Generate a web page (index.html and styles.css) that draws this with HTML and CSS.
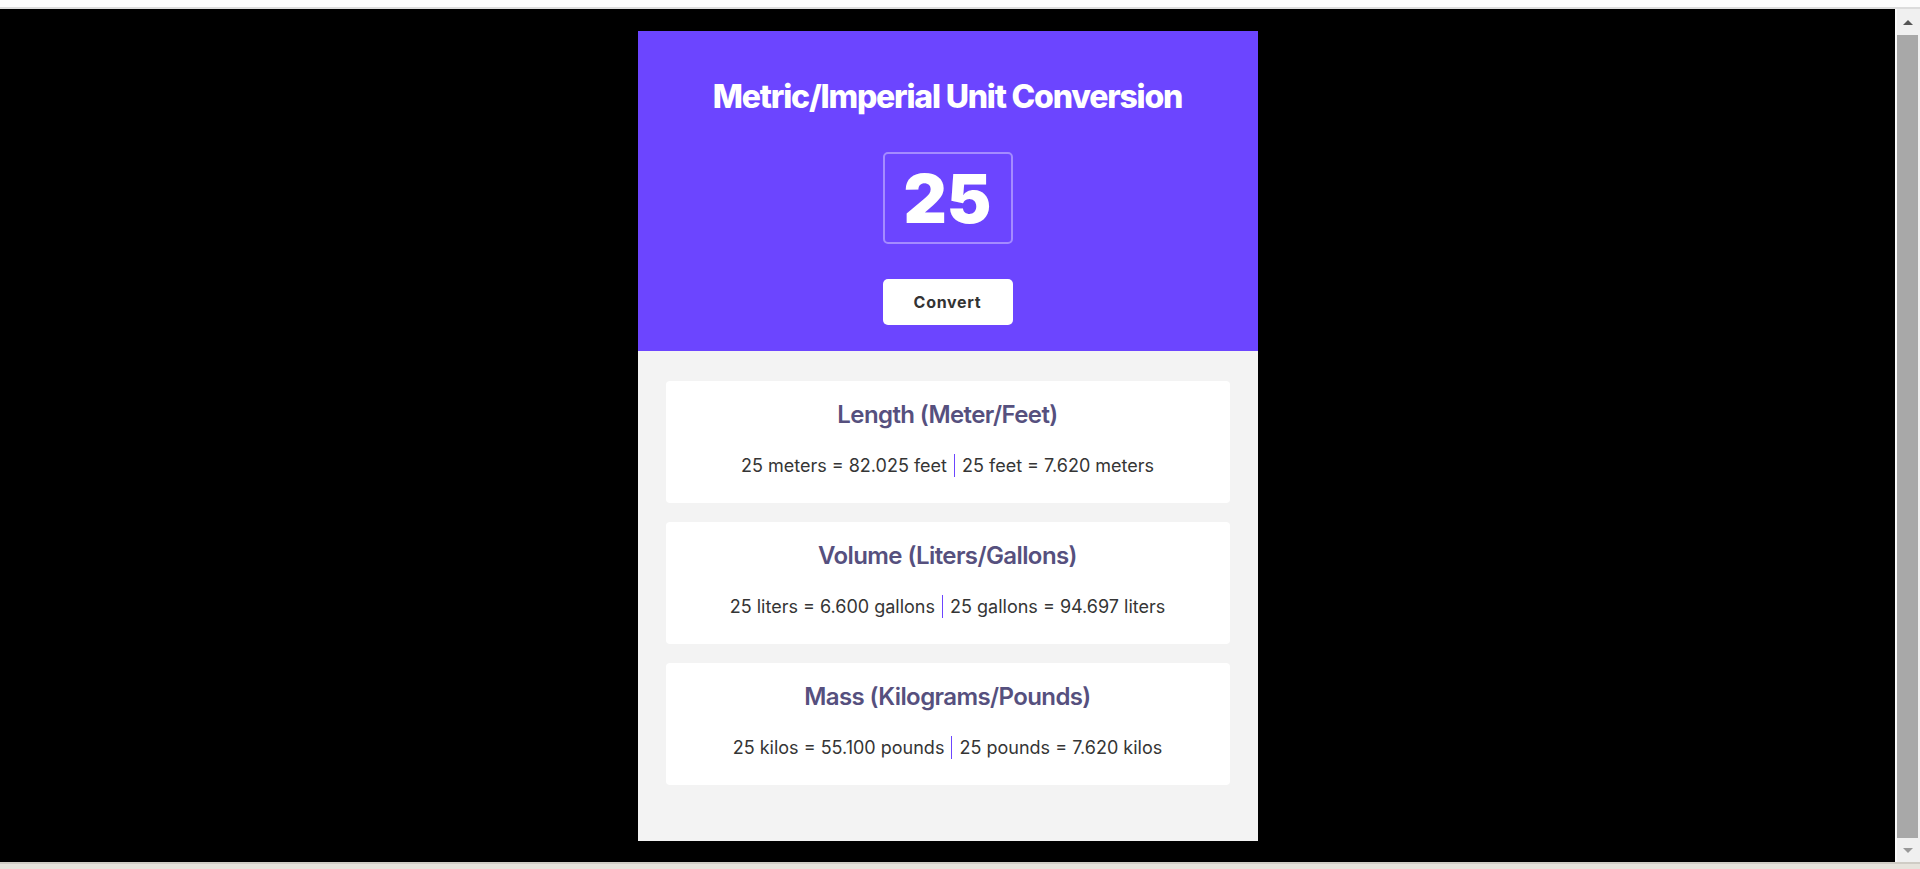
FILE: index.html
```html
<!DOCTYPE html>
<html lang="en">
<head>
<meta charset="utf-8">
<title>Metric/Imperial Unit Conversion</title>
<link rel="stylesheet" href="styles.css">
</head>
<body>
<div class="frame">
  <div class="topbar"></div>
  <div class="viewport">
    <div class="page">
      <main class="card">
        <section class="head">
          <h1 class="title">Metric/Imperial Unit Conversion</h1>
          <input class="num-input" type="text" value="25">
          <button class="convert-btn">Convert</button>
        </section>
        <section class="results">
          <div class="result">
            <h2 class="result-title">Length (Meter/Feet)</h2>
            <p class="result-text">25 meters = 82.025 feet <span class="sep"></span> 25 feet = 7.620 meters</p>
          </div>
          <div class="result">
            <h2 class="result-title">Volume (Liters/Gallons)</h2>
            <p class="result-text">25 liters = 6.600 gallons <span class="sep"></span> 25 gallons = 94.697 liters</p>
          </div>
          <div class="result">
            <h2 class="result-title">Mass (Kilograms/Pounds)</h2>
            <p class="result-text">25 kilos = 55.100 pounds <span class="sep"></span> 25 pounds = 7.620 kilos</p>
          </div>
        </section>
      </main>
    </div>
    <div class="scrollbar">
      <div class="sb-btn sb-up"><span class="arrow-up"></span></div>
      <div class="sb-thumb"></div>
      <div class="sb-btn sb-down"><span class="arrow-down"></span></div>
    </div>
  </div>
  <div class="bottombar"></div>
</div>
</body>
</html>
```

FILE: styles.css
```css
* { box-sizing: border-box; }

html, body {
  margin: 0;
  padding: 0;
  width: 1920px;
  height: 869px;
  overflow: hidden;
  font-family: "Inter", "Noto Sans", sans-serif;
}

.frame {
  display: flex;
  flex-direction: column;
  height: 869px;
}

.topbar {
  height: 9px;
  background: #fcfcfc;
  border-bottom: 2px solid #dcdcdc;
}

.viewport {
  flex: 1;
  display: flex;
  min-height: 0;
}

.page {
  flex: 1;
  background: #000;
  padding-top: 22px;
  overflow: hidden;
}

.card {
  width: 620px;
  margin: 0 auto;
}

.head {
  background: #6c45ff;
  height: 320px;
  padding-top: 46px;
  display: flex;
  flex-direction: column;
  align-items: center;
}

.title {
  margin: 0;
  color: #fff;
  font-size: 32px;
  line-height: 40px;
  font-weight: 800;
  letter-spacing: -1.2px;
}

.num-input {
  margin-top: 35px;
  width: 130px;
  height: 92px;
  background: transparent;
  border: 2px solid rgba(255, 255, 255, 0.38);
  border-radius: 5px;
  color: #fff;
  font-family: "Inter", sans-serif;
  font-size: 67px;
  font-weight: 900;
  text-align: center;
  padding: 0;
  outline: none;
}

.convert-btn {
  margin-top: 35px;
  width: 130px;
  height: 46px;
  background: #fff;
  border: none;
  border-radius: 5px;
  color: #333;
  font-family: "Inter", sans-serif;
  font-size: 16px;
  font-weight: 700;
  letter-spacing: 0.7px;
  padding: 0;
}

.results {
  background: #f3f3f3;
  padding: 30px 28px 56px;
  display: flex;
  flex-direction: column;
  gap: 19px;
}

.result {
  background: #fff;
  border-radius: 4px;
  height: 122px;
  padding: 20px 16px 23px;
  text-align: center;
}

.result-title {
  margin: 0;
  font-size: 24px;
  line-height: 28px;
  font-weight: 600;
  letter-spacing: -0.6px;
  color: #56507e;
}

.result-text {
  margin: 23px 0 0;
  font-size: 18px;
  line-height: 28px;
  font-weight: 400;
  color: #353535;
}

.sep {
  display: inline-block;
  width: 1px;
  height: 23px;
  background: #6c45ff;
  vertical-align: -5px;
  margin: 0 2px;
}

.scrollbar {
  width: 25px;
  background: #f0f0f0;
  border-left: 2px solid #fafafa;
  display: flex;
  flex-direction: column;
  padding-right: 2px;
}

.sb-btn {
  display: flex;
  align-items: center;
  justify-content: center;
}

.sb-up { height: 26px; }
.sb-down { height: 24px; }

.sb-thumb {
  flex: 1;
  background: #a8a8a8;
}

.arrow-up {
  width: 0;
  height: 0;
  border-left: 5px solid transparent;
  border-right: 5px solid transparent;
  border-bottom: 5px solid #555;
}

.arrow-down {
  width: 0;
  height: 0;
  border-left: 5px solid transparent;
  border-right: 5px solid transparent;
  border-top: 5px solid #999;
}

.bottombar {
  height: 7px;
  background: #e6e3dc;
  border-top: 2px solid #cfccc5;
}
```
